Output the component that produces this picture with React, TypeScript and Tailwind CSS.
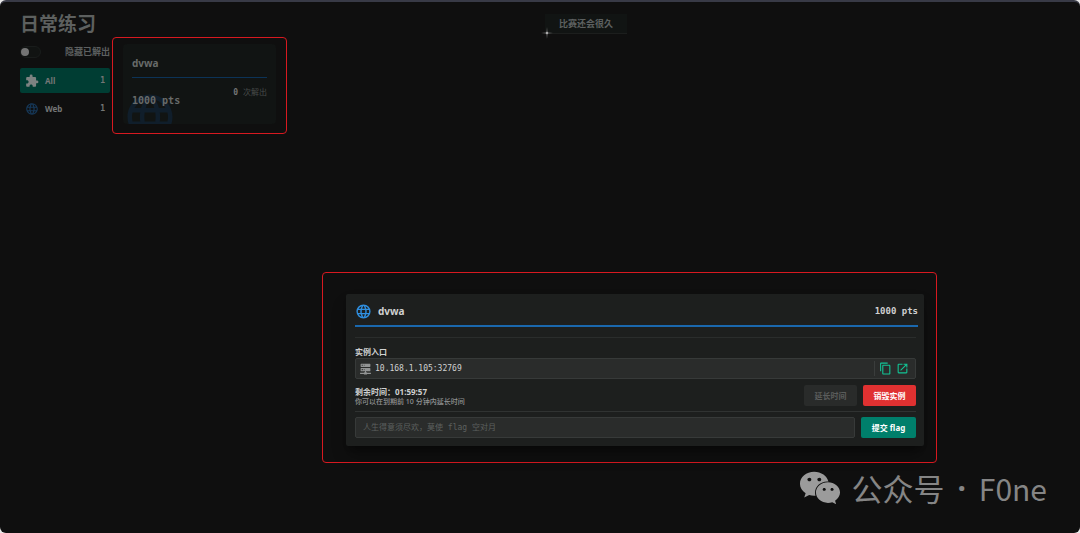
import React from 'react';
import { MdContentCopy, MdExtension, MdOpenInNew } from 'react-icons/md';
import { FaWeixin } from 'react-icons/fa';
import clsx from 'clsx';

const sans = "font-['Noto_Sans','Noto_Sans_CJK_SC',sans-serif]";
const mono = "font-['DejaVu_Sans_Mono','Noto_Sans_CJK_SC',monospace]";

const WebIcon: React.FC<{ className?: string }> = ({ className }) => (
  <svg viewBox="0 0 24 24" fill="currentColor" className={className} aria-hidden="true">
    <path d="M16.36,14C16.44,13.34 16.5,12.68 16.5,12C16.5,11.32 16.44,10.66 16.36,10H19.74C19.9,10.64 20,11.31 20,12C20,12.69 19.9,13.36 19.74,14M14.59,19.56C15.19,18.45 15.65,17.25 15.97,16H18.92C17.96,17.65 16.43,18.93 14.59,19.56M14.34,14H9.66C9.56,13.34 9.5,12.68 9.5,12C9.5,11.32 9.56,10.65 9.66,10H14.34C14.43,10.65 14.5,11.32 14.5,12C14.5,12.68 14.43,13.34 14.34,14M12,19.96C11.17,18.76 10.5,17.43 10.09,16H13.91C13.5,17.43 12.83,18.76 12,19.96M8,8H5.08C6.03,6.34 7.57,5.06 9.4,4.44C8.8,5.55 8.35,6.75 8,8M5.08,16H8C8.35,17.25 8.8,18.45 9.4,19.56C7.57,18.93 6.03,17.65 5.08,16M4.26,14C4.1,13.36 4,12.69 4,12C4,11.31 4.1,10.64 4.26,10H7.64C7.56,10.66 7.5,11.32 7.5,12C7.5,12.68 7.56,13.34 7.64,14M12,4.03C12.83,5.23 13.5,6.57 13.91,8H10.09C10.5,6.57 11.17,5.23 12,4.03M18.92,8H15.97C15.65,6.75 15.19,5.55 14.59,4.44C16.43,5.07 17.96,6.34 18.92,8M12,2C6.47,2 2,6.5 2,12A10,10 0 0,0 12,22A10,10 0 0,0 22,12A10,10 0 0,0 12,2Z" />
  </svg>
);

const ServerIcon: React.FC<{ className?: string }> = ({ className }) => (
  <svg viewBox="0 0 24 24" fill="currentColor" className={className} aria-hidden="true">
    <path d="M13,19H14A1,1 0 0,1 15,20H22V22H15A1,1 0 0,1 14,23H10A1,1 0 0,1 9,22H2V20H9A1,1 0 0,1 10,19H11V17H4A1,1 0 0,1 3,16V12A1,1 0 0,1 4,11H20A1,1 0 0,1 21,12V16A1,1 0 0,1 20,17H13V19M4,3H20A1,1 0 0,1 21,4V8A1,1 0 0,1 20,9H4A1,1 0 0,1 3,8V4A1,1 0 0,1 4,3M9,7H10V5H9V7M9,15H10V13H9V15M5,5V7H7V5H5M5,13V15H7V13H5Z" />
  </svg>
);

const Spark: React.FC = () => (
  <svg viewBox="0 0 12 12" className="absolute -bottom-1.5 -left-1 size-3" aria-hidden="true">
    <path d="M6 0 6.5 5.5 12 6 6.5 6.5 6 12 5.5 6.5 0 6 5.5 5.5Z" fill="#777" />
    <circle cx="6" cy="6" r="1.2" fill="#aaa" />
  </svg>
);

interface CategoryProps {
  icon: React.ReactNode;
  label: string;
  count: number;
  active?: boolean;
}

const Category: React.FC<CategoryProps> = ({ icon, label, count, active }) => (
  <button
    type="button"
    className={clsx(
      'flex h-[25px] w-full items-center rounded-xs px-[5px] text-[8px] font-bold text-[#747676]',
      active && 'bg-[#003d33]'
    )}
  >
    {icon}
    <span className="ml-1.5">{label}</span>
    <span className={clsx('ml-auto', mono)}>{count}</span>
  </button>
);

const Sidebar: React.FC = () => (
  <aside className="w-[90px] shrink-0 pt-2">
    <label className="flex h-3.5 items-center justify-between text-[9px] font-bold whitespace-nowrap text-[#5d6060]">
      <input
        type="checkbox"
        className="flex h-3 w-[21px] appearance-none items-center rounded-full border border-[#191c1b] bg-[#111312] before:size-2 before:rounded-full before:bg-[#747474] checked:justify-end"
      />
      隐藏已解出
    </label>
    <nav className="mt-[9px] flex flex-col gap-[3px]">
      <Category active icon={<MdExtension className="size-3.5 text-[#7d8281]" />} label="All" count={1} />
      <Category icon={<WebIcon className="size-3.5 text-[#16395a]" />} label="Web" count={1} />
    </nav>
  </aside>
);

const ChallengeCard: React.FC = () => (
  <article className="relative overflow-hidden rounded-sm bg-[#111413] px-[9px] pt-3 pb-4">
    <WebIcon className="absolute top-[46px] left-0 size-[54px] text-[#101e2b]" />
    <div className="relative text-[#686b6a]">
      <h2 className="text-[10px] leading-3.5 font-bold">dvwa</h2>
      <hr className="mt-[7px] border-[#0c3357]" />
      <div className="mt-2 flex items-start justify-between">
        <span className={clsx('mt-2 text-[10px] leading-3.5 font-bold', mono)}>1000 pts</span>
        <span className={clsx('text-[8px] leading-3.5 text-[#484b4a]', mono)}>
          <b className="text-[#747676]">0</b> 次解出
        </span>
      </div>
    </div>
  </article>
);

const InstancePanel: React.FC = () => (
  <section
    role="dialog"
    aria-label="dvwa"
    className="rounded-xs bg-[#1d1f1e] pt-1.5 pr-1.5 pb-2 pl-[9px] text-[8px] text-[#d0d1d1] shadow-lg shadow-black/40"
  >
    <header className="mb-0.5 flex h-[23px] items-center">
      <WebIcon className="size-[17px] text-[#2f8fe0]" />
      <h2 className="ml-1.5 text-[10px] font-bold">dvwa</h2>
      <span className={clsx('ml-auto text-[9px] font-bold', mono)}>1000 pts</span>
    </header>
    <hr className="border-t-2 border-[#1a68ae]" />

    <div className="mt-2.5 mr-0.5 border-t border-[#2a2d2c] pt-2">
      <h3 className="leading-3 font-bold">实例入口</h3>
      <div className="flex h-[21px] items-center rounded-xs border border-[#373a39] bg-[#2a2c2b] py-0.5 pr-1.5 pl-[3px]">
        <ServerIcon className="size-[13px] text-[#929494]" />
        <input
          readOnly
          aria-label="实例入口"
          value="10.168.1.105:32769"
          className={clsx('ml-[3px] min-w-0 flex-1 bg-transparent outline-none', mono)}
        />
        <div className="flex h-full items-center gap-1 border-l border-[#3a3d3c] pl-1 text-[#12c495]">
          <button type="button" aria-label="复制">
            <MdContentCopy className="size-[13px]" />
          </button>
          <button type="button" aria-label="打开">
            <MdOpenInNew className="size-[13px]" />
          </button>
        </div>
      </div>

      <div className="flex items-center gap-1.5 pt-1.5 pb-[5px]">
        <div className="mr-auto">
          <p className="leading-3 font-bold">剩余时间：01:59:57</p>
          <p className="text-[7px] leading-2 font-medium text-[#929494]">你可以在到期前 10 分钟内延长时间</p>
        </div>
        <button type="button" disabled className="h-[21px] w-[53px] rounded-xs bg-[#292b2a] font-bold text-[#5b5d5c]">
          延长时间
        </button>
        <button type="button" className="h-[21px] w-[53px] rounded-xs bg-[#e03131] font-bold text-white">
          销毁实例
        </button>
      </div>

      <form className="flex gap-1.5 border-t border-[#303332] pt-[5px]" onSubmit={(e) => e.preventDefault()}>
        <input
          aria-label="flag"
          placeholder="人生得意须尽欢，莫使 flag 空对月"
          className={clsx(
            'h-[21px] min-w-0 flex-1 rounded-xs border border-[#373a39] bg-[#2a2c2b] px-[7px] outline-none placeholder:text-[#5d605f]',
            mono
          )}
        />
        <button type="submit" className="h-[21px] w-[55px] rounded-xs bg-[#007f6b] font-bold text-white">
          提交 flag
        </button>
      </form>
    </div>
  </section>
);

export default function App() {
  return (
    <div className="min-h-screen bg-[#e8e8e8]">
      <div className={clsx('flex min-h-screen flex-col rounded-md border-t-2 border-[#383a46] bg-[#0f0f0f]', sans)}>
        <header className="flex h-[35px] items-start px-5 pt-2">
          <h1 className="w-[92px] shrink-0 text-[19px] leading-7 font-bold text-[#5d605f]">日常练习</h1>
          <div className="relative mx-auto mt-1 h-5 w-[82px] border-b border-[#1c1e1d] bg-[#111413] text-center text-[9px] leading-[19px] font-bold text-[#5d6060]">
            比赛还会很久
            <Spark />
          </div>
        </header>

        <main className="flex items-start gap-0.5 pl-5">
          <Sidebar />
          <div className="w-[175px] rounded-sm border border-[#d71920] px-2.5 pt-1.5 pb-[9px]">
            <ChallengeCard />
          </div>
        </main>

        <div className="mt-[138px] flex justify-end pr-[143px]">
          <div className="w-full max-w-[615px] rounded-sm border border-[#d71920] pt-[21px] pr-3 pb-4 pl-[23px]">
            <InstancePanel />
          </div>
        </div>

        <footer className="mt-1 flex items-center justify-end gap-2.5 pr-[33px] text-[30px] leading-[42px] text-[#858585]">
          <FaWeixin className="size-[42px] text-[#9b9b9b]" />
          <p className="flex gap-[13px] font-['Noto_Sans_CJK_SC',sans-serif]">
            <span className="text-[31px]">公众号</span>
            <span className="font-['Noto_Sans',sans-serif] font-bold">·</span>
            <span>F0ne</span>
          </p>
        </footer>
      </div>
    </div>
  );
}
